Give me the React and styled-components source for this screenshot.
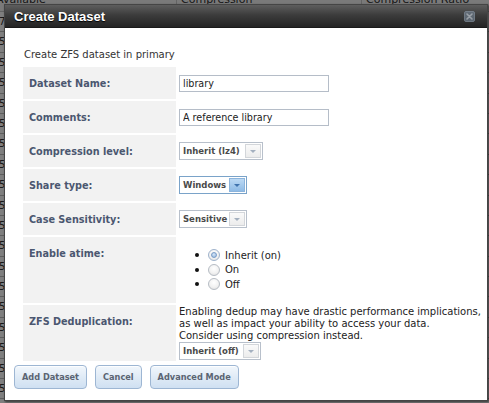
import React from 'react';
import styled, { createGlobalStyle, css } from 'styled-components';

const Global = createGlobalStyle`
  html, body { margin: 0; padding: 0; }
  body {
    width: 489px; height: 403px; overflow: hidden; background: #fff;
    font-family: "DejaVu Sans", Verdana, sans-serif;
  }
`;

const Page = styled.div`
  position: relative;
  width: 489px;
  height: 403px;
  overflow: hidden;
  background: #fff;
`;

/* ---------- background table (behind the modal) ---------- */
const BgTable = styled.div`
  display: grid;
  grid-template-columns: 185px 185px 200px;
  margin-left: -8px;
  margin-top: -7px;
  font-size: 11px;
  color: #333;
`;

const BgHead = styled.div`
  height: 19px;
  box-sizing: border-box;
  padding: 1px 0 0 4px;
  line-height: 12px;
  background: #f4f4f4;
  border-right: 1px solid #c8c8c8;
  border-bottom: 1px solid #c8c8c8;
`;

const BgCell = styled.div`
  height: 20.4px;
  box-sizing: border-box;
  padding-left: ${p => p.$indent}px;
  line-height: 20px;
  font-size: 10px;
  border-right: 1px solid #c8c8c8;
  border-bottom: 1px solid #bdbdbd;
  white-space: nowrap;
`;

const Overlay = styled.div`
  position: absolute;
  inset: 0;
  background: rgba(0, 0, 0, 0.5);
`;

/* ---------- dialog ---------- */
const Dialog = styled.div`
  position: absolute;
  left: 4px;
  top: 4px;
  width: 484px;
  height: 397px;
  box-sizing: border-box;
  border: 1px solid #454545;
  box-shadow: 1px 1px 2px rgba(0, 0, 0, 0.6);
  background: #fff;
  display: flex;
  flex-direction: column;
`;

const TitleBar = styled.div`
  height: 23px;
  flex: none;
  display: flex;
  align-items: center;
  justify-content: space-between;
  padding: 0 12px 0 9px;
  background: linear-gradient(#5e5e5e 0%, #3c3c3c 45%, #242424 100%);
  border-bottom: 1px solid #1a1a1a;
  box-sizing: border-box;
`;

const TitleText = styled.span`
  font: bold 13px "Liberation Sans", Arial, sans-serif;
  color: #fff;
  text-shadow: 0 1px 1px #000;
`;

const CloseIcon = styled.svg`
  width: 11px;
  height: 11px;
  opacity: 0.7;
`;

const Body = styled.div`
  flex: 1;
  padding: 21px 0 0 9px;
`;

const Form = styled.div`
  margin-left: 9px;
`;

const Intro = styled.p`
  margin: 0 0 6px 1px;
  font-size: 10px;
  line-height: 12px;
  color: #333;
`;

const Grid = styled.div`
  display: grid;
  grid-template-columns: 153px 302px;
  gap: 2px;
`;

const Label = styled.div`
  background: #f2f2f2;
  box-sizing: border-box;
  min-height: 32px;
  padding: 11px 6px 9px;
  font-size: 9.7px;
  line-height: 12px;
  font-weight: bold;
  color: #4b5770;
`;

const Value = styled.div`
  box-sizing: border-box;
  min-height: 32px;
  padding: ${p => p.$pad || '0'} 0 ${p => p.$pad || '0'} 1px;
  display: flex;
  flex-direction: column;
  justify-content: center;
  align-items: flex-start;
  font-size: 10px;
  color: #222;
`;

const TextInput = styled.input`
  width: 150px;
  height: 17px;
  box-sizing: border-box;
  border: 1px solid #b5bdc8;
  padding: 0 3px;
  margin: 0;
  font: 9.6px "DejaVu Sans", Verdana, sans-serif;
  color: #222;
  background: #fff;
  outline: none;
`;

const SelectBox = styled.div`
  display: inline-flex;
  width: ${p => p.$w}px;
  height: 18px;
  box-sizing: border-box;
  border: 1px solid ${p => (p.$active ? '#7aa3c9' : '#b8c0cb')};
  background: #fff;
  font: bold 8.5px "DejaVu Sans", Verdana, sans-serif;
  color: #4a4a4a;
  flex: none;
`;

const SelectText = styled.span`
  flex: 1;
  min-width: 0;
  padding-left: 3px;
  line-height: 16px;
  white-space: nowrap;
  overflow: hidden;
`;

const SelectArrow = styled.span`
  width: 16px;
  margin: 1px 1px 1px 0;
  box-sizing: border-box;
  display: flex;
  align-items: center;
  justify-content: center;
  border: 1px solid ${p => (p.$active ? '#8cb4dc' : '#d3d6da')};
  background: ${p =>
    p.$active
      ? 'linear-gradient(#bcd9f4, #8fbbe6)'
      : 'linear-gradient(#fafafa, #ececec)'};
  &::after {
    content: '';
    border-left: 3px solid transparent;
    border-right: 3px solid transparent;
    border-top: 3px solid ${p => (p.$active ? '#3f73ad' : '#a4b0bf')};
  }
`;

const Select = ({ w, active, children }) => (
  <SelectBox $w={w} $active={active}>
    <SelectText>{children}</SelectText>
    <SelectArrow $active={active} />
  </SelectBox>
);

const RadioList = styled.ul`
  list-style: none;
  margin: 11px 0 11.5px;
  padding: 0 0 0 16px;
`;

const RadioItem = styled.li`
  display: flex;
  align-items: center;
  height: 14.5px;
  font-size: 10px;
  color: #222;
  &::before {
    content: '';
    width: 4px;
    height: 4px;
    border-radius: 50%;
    background: #111;
    margin-right: 9px;
  }
`;

const Radio = styled.span`
  width: 12px;
  height: 12px;
  box-sizing: border-box;
  border-radius: 50%;
  border: 1px solid #b6bcc4;
  background: radial-gradient(circle at 50% 35%, #ffffff 0%, #f2f2f2 55%, #dadada 100%);
  display: inline-flex;
  align-items: center;
  justify-content: center;
  margin-right: 5px;
  ${p =>
    p.$checked &&
    css`
      border-color: #9fb3cc;
      &::after {
        content: '';
        width: 6px;
        height: 6px;
        box-sizing: border-box;
        border-radius: 50%;
        border: 1px solid #7a9cc6;
        background: radial-gradient(circle at 45% 35%, #d6e6f7, #8fb3dd);
      }
    `}
`;

const Note = styled.div`
  font-size: 10px;
  line-height: 12px;
  color: #222;
  white-space: nowrap;
`;

const ButtonBar = styled.div`
  display: flex;
  gap: 8px;
  margin-top: 4px;
`;

const Button = styled.button`
  height: 24px;
  box-sizing: border-box;
  padding: 0 7px;
  margin: 0;
  border: 1px solid #9db6d3;
  border-radius: 4px;
  background: linear-gradient(#f2f7fc 0%, #e0ebf6 50%, #cfe0f2 100%);
  box-shadow: inset 0 1px 0 rgba(255, 255, 255, 0.8);
  font: bold 8.2px "DejaVu Sans", Verdana, sans-serif;
  color: #5a6472;
  cursor: pointer;
`;

const bgRows = ['7.1 TiB', '5.2 TiB', '5.9 TiB', '5.4 TiB', '5.0 TiB', '5.8 TiB', '5.3 TiB', '5.6 TiB',
  '5.2 TiB', '5.9 TiB', '5.1 TiB', '5.7 TiB', '5.4 TiB', '5.2 TiB', '5.6 TiB', '5.0 TiB', '5.3 TiB',
  '5.5 TiB', '5.1 TiB'];

export default function App() {
  return (
    <>
      <Global />
      <Page>
        <BgTable>
          <BgHead>Available</BgHead>
          <BgHead>Compression</BgHead>
          <BgHead>Compression Ratio</BgHead>
          {bgRows.map((v, i) => (
            <React.Fragment key={i}>
              <BgCell $indent={7}>{v}</BgCell>
              <BgCell $indent={4}>lz4</BgCell>
              <BgCell $indent={4}>1.00x</BgCell>
            </React.Fragment>
          ))}
        </BgTable>
        <Overlay />
        <Dialog>
          <TitleBar>
            <TitleText>Create Dataset</TitleText>
            <CloseIcon viewBox="0 0 11 11">
              <rect x="0.5" y="0.5" width="10" height="10" rx="1.5" fill="#6d7b8a" stroke="#8896a5" />
              <path d="M3 3 L8 8 M8 3 L3 8" stroke="#c3ccd6" strokeWidth="1.6" strokeLinecap="round" />
            </CloseIcon>
          </TitleBar>
          <Body>
            <Form>
              <Intro>Create ZFS dataset in primary</Intro>
              <Grid>
                <Label>Dataset Name:</Label>
                <Value>
                  <TextInput defaultValue="library" />
                </Value>

                <Label>Comments:</Label>
                <Value>
                  <TextInput defaultValue="A reference library" />
                </Value>

                <Label>Compression level:</Label>
                <Value>
                  <Select w={84}>Inherit (lz4)</Select>
                </Value>

                <Label>Share type:</Label>
                <Value>
                  <Select w={68} active>Windows</Select>
                </Value>

                <Label>Case Sensitivity:</Label>
                <Value>
                  <Select w={68}>Sensitive</Select>
                </Value>

                <Label>Enable atime:</Label>
                <Value>
                  <RadioList>
                    <RadioItem><Radio $checked />Inherit (on)</RadioItem>
                    <RadioItem><Radio />On</RadioItem>
                    <RadioItem><Radio />Off</RadioItem>
                  </RadioList>
                </Value>

                <Label>ZFS Deduplication:</Label>
                <Value $pad="1px">
                  <Note>
                    Enabling dedup may have drastic performance implications,<br />
                    as well as impact your ability to access your data.<br />
                    Consider using compression instead.
                  </Note>
                  <Select w={82}>Inherit (off)</Select>
                </Value>
              </Grid>
            </Form>
            <ButtonBar>
              <Button>Add Dataset</Button>
              <Button>Cancel</Button>
              <Button>Advanced Mode</Button>
            </ButtonBar>
          </Body>
        </Dialog>
      </Page>
    </>
  );
}
